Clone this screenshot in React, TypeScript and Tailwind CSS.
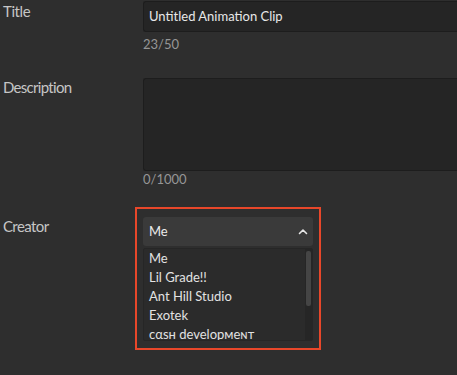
import React from 'react';

const creators = ['Me', 'Lil Grade!!', 'Ant Hill Studio', 'Exotek', 'cαsн developмeɴт'];

const ChevronUp = () => (
  <svg width="10" height="7" viewBox="0 0 10 7" fill="none" className="shrink-0">
    <path d="M1.5 5.5 L5 2 L8.5 5.5" stroke="#e6e6e6" strokeWidth="1.6" strokeLinecap="round" strokeLinejoin="round" />
  </svg>
);

export default function App() {
  return (
    <div
      className="w-full h-[375px] overflow-hidden bg-[#2e2e2e] text-[#d0d0d0]"
      style={{ fontFamily: 'Lato, "Noto Sans", sans-serif' }}
    >
      {/* Title */}
      <div className="flex pt-px">
        <div className="w-[143px] shrink-0 pl-[3px] pt-[1px] text-[15px] leading-[18px] tracking-[-0.4px] text-[#c6c6c6]">Title</div>
        <div className="flex-1 flex flex-col">
          <div className="h-[31px] rounded-l-[3px] bg-[#252525] border border-r-0 border-[#1d1d1d] flex items-center pl-[5px] text-[13px] text-[#e8e8e8]">
            Untitled Animation Clip
          </div>
          <div className="mt-[4px] text-[13px] leading-[16px] text-[#969696]">23/50</div>
        </div>
      </div>

      {/* Description */}
      <div className="flex mt-[26px]">
        <div className="w-[143px] shrink-0 pl-[3px] text-[15px] leading-[18px] tracking-[-0.7px] text-[#c6c6c6]">Description</div>
        <div className="flex-1 flex flex-col">
          <div className="h-[93px] rounded-l-[3px] bg-[#252525] border border-r-0 border-[#1d1d1d]" />
          <div className="text-[13px] leading-[16px] text-[#969696]">0/1000</div>
        </div>
      </div>

      {/* Creator */}
      <div className="flex mt-[20px]">
        <div className="w-[135px] shrink-0 pl-[3px] pt-[10px] text-[15px] leading-[18px] tracking-[-0.6px] text-[#c6c6c6]">Creator</div>
        <div className="w-[186px] border-2 border-[#e8472a] px-[6px] pt-[8px] pb-[7px]">
          <div className="h-[29px] rounded-[3px] bg-[#3a3a3a] flex items-center justify-between pl-[6px] pr-[5px] text-[13px] text-[#ececec]">
            <span>Me</span>
            <ChevronUp />
          </div>
          <div className="mt-[2px] h-[93px] flex bg-[#2b2b2b] border border-[#262626] rounded-[2px] overflow-hidden">
            <div className="flex-1 flex flex-col">
              {creators.map((c) => (
                <div key={c} className="h-[19px] shrink-0 flex items-center pl-[5px] text-[13px] text-[#e2e2e2] whitespace-nowrap">
                  {c}
                </div>
              ))}
            </div>
            <div className="w-[7px] bg-[#262626] flex justify-center pt-[2px]">
              <div className="w-[5px] h-[55px] rounded-[2px] bg-[#454545]" />
            </div>
          </div>
        </div>
      </div>
    </div>
  );
}
